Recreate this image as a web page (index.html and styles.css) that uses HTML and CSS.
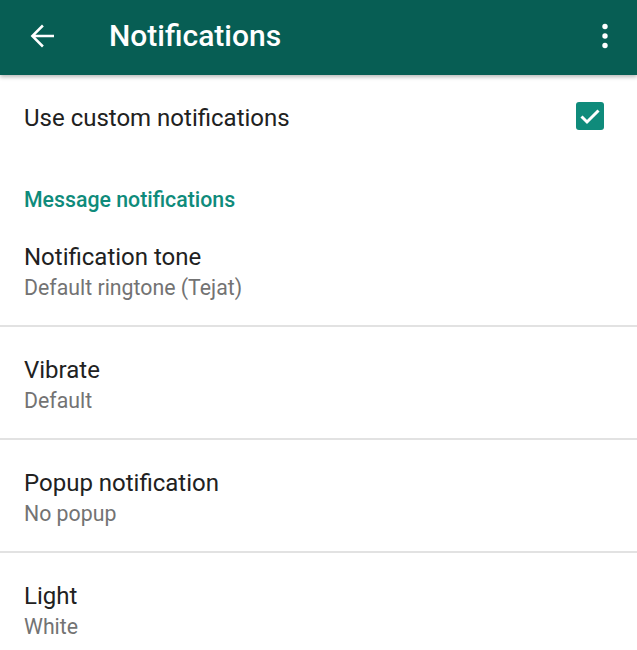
FILE: index.html
```html
<!DOCTYPE html>
<html>
<head>
<meta charset="utf-8">
<link rel="stylesheet" href="styles.css">
</head>
<body>
<div class="appbar">
  <svg class="back" width="36" height="36" viewBox="0 0 24 24"><path d="M20 11.2H7.6l5.6-5.6L12 4.4l-7.6 7.6 7.6 7.6 1.2-1.2-5.6-5.6H20v-1.6z" fill="#fff"/></svg>
  <div class="title">Notifications</div>
  <svg class="more" width="8" height="26" viewBox="0 0 8 26"><circle cx="4" cy="3.5" r="2.7" fill="#fff"/><circle cx="4" cy="13" r="2.7" fill="#fff"/><circle cx="4" cy="22.5" r="2.7" fill="#fff"/></svg>
</div>
<div class="list">
  <div class="row-check">
    <div class="primary">Use custom notifications</div>
    <div class="checkbox"><svg width="28" height="28" viewBox="0 0 28 28"><path d="M5.5 14.5L11 20L22.5 8.5" fill="none" stroke="#fff" stroke-width="3"/></svg></div>
  </div>
  <div class="section">Message notifications</div>
  <div class="item first">
    <div class="primary">Notification tone</div>
    <div class="secondary">Default ringtone (Tejat)</div>
  </div>
  <div class="item">
    <div class="primary">Vibrate</div>
    <div class="secondary">Default</div>
  </div>
  <div class="item">
    <div class="primary">Popup notification</div>
    <div class="secondary">No popup</div>
  </div>
  <div class="item last">
    <div class="primary">Light</div>
    <div class="secondary">White</div>
  </div>
</div>
</body>
</html>
```
FILE: styles.css
```css
html, body { margin: 0; padding: 0; background: #fff; }
body { font-family: Roboto, "Noto Sans", sans-serif; width: 637px; height: 650px; overflow: hidden; }
.appbar {
  height: 75px; background: #075e54; display: flex; align-items: center;
  box-shadow: 0 2px 4px rgba(0,0,0,0.28); position: relative; z-index: 1;
}
.back { margin-left: 24px; margin-top: -4px; }
.title { color: #fff; font-size: 30px; font-weight: 500; margin-left: 49px; flex: 1; margin-top: -4px; line-height: 36px; }
.more { margin-right: 28px; margin-top: -4px; }
.list { padding-left: 24px; }
.row-check { display: flex; align-items: center; justify-content: space-between; height: 86px; padding-right: 33px; }
.checkbox {
  width: 28px; height: 28px; background: #0f8b7b; border-radius: 3px; display: flex;
  align-items: center; justify-content: center; margin-top: -4px;
}
.primary { font-size: 24px; line-height: 28px; color: #212121; }
.secondary { font-size: 21.3px; line-height: 26px; color: #737373; margin-top: 4px; }
.section { font-size: 21.3px; line-height: 26px; font-weight: 500; color: #0f8b7b; margin-top: 26px; }
.item { border-bottom: 2px solid #e2e2e2; margin-left: -24px; padding: 29px 0 24px 24px; }
.item.first { padding-top: 30px; }
.item.last { border-bottom: none; }
```
